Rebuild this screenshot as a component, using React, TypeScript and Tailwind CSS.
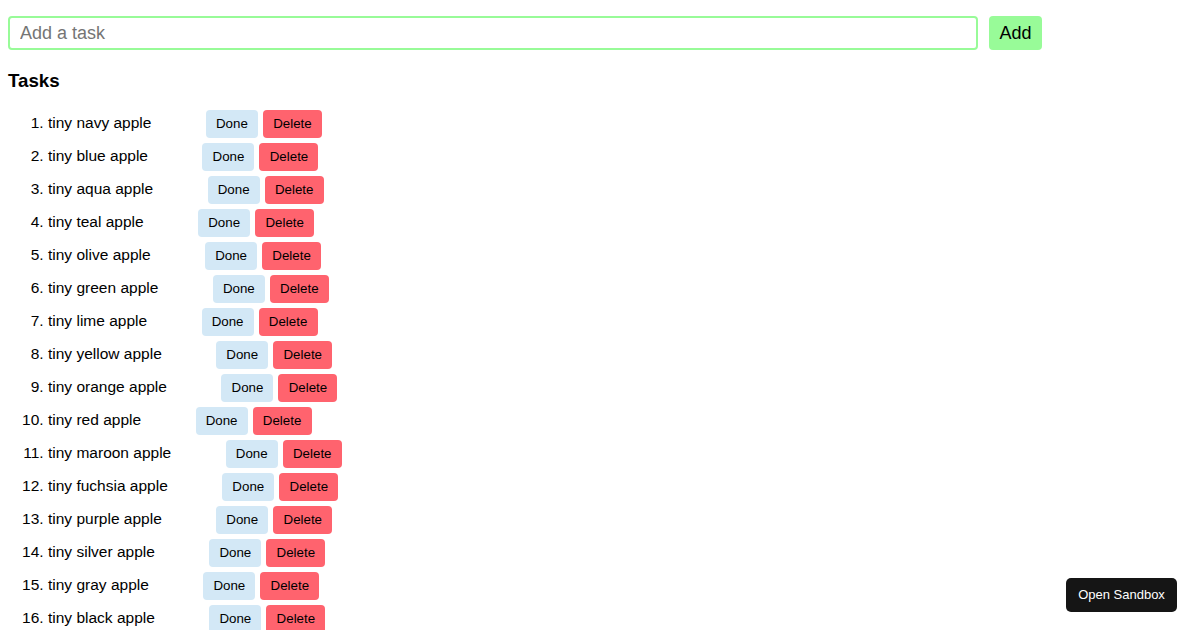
import React from "react";

const items = [
  "navy",
  "blue",
  "aqua",
  "teal",
  "olive",
  "green",
  "lime",
  "yellow",
  "orange",
  "red",
  "maroon",
  "fuchsia",
  "purple",
  "silver",
  "gray",
  "black",
];

export default function App() {
  return (
    <div
      className="relative h-[630px] w-[1200px] overflow-hidden bg-white p-2 text-black"
      style={{ fontFamily: '"Liberation Sans", Arial, sans-serif' }}
    >
      <div className="mt-2 flex items-center gap-[11px]">
        <input
          type="text"
          placeholder="Add a task"
          className="h-[34px] w-[970px] rounded-[4px] border-2 border-[#98fb98] bg-white px-[10px] text-[18px] text-black outline-none placeholder:text-[#757575]"
        />
        <button className="h-[34px] w-[53px] rounded-[4px] bg-[#98fb98] text-center text-[18px] text-black">
          Add
        </button>
      </div>
      <h3 className="mt-[20px] text-[18.72px] font-bold leading-[22px]">Tasks</h3>
      <ol className="mt-[15.5px]">
        {items.map((c, i) => (
          <li key={c} className="flex h-[33px] items-center text-[15.5px]">
            <span className="mb-[2px] w-[40px] pr-[4.4px] text-right">{i + 1}.</span>
            <span className="mb-[2px]">tiny {c} apple</span>
            <button className="ml-[54.5px] h-[28px] w-[52px] rounded-[4px] bg-[#d3e8f6] text-center text-[13.33px] text-black">
              Done
            </button>
            <button className="ml-[5px] h-[28px] w-[59px] rounded-[4px] bg-[#ff636e] text-center text-[13.33px] text-black">
              Delete
            </button>
          </li>
        ))}
      </ol>
      <button className="absolute bottom-[18px] right-[23px] h-[34px] w-[111px] rounded-[5px] bg-[#151515] text-[13px] text-white">
        Open Sandbox
      </button>
    </div>
  );
}
